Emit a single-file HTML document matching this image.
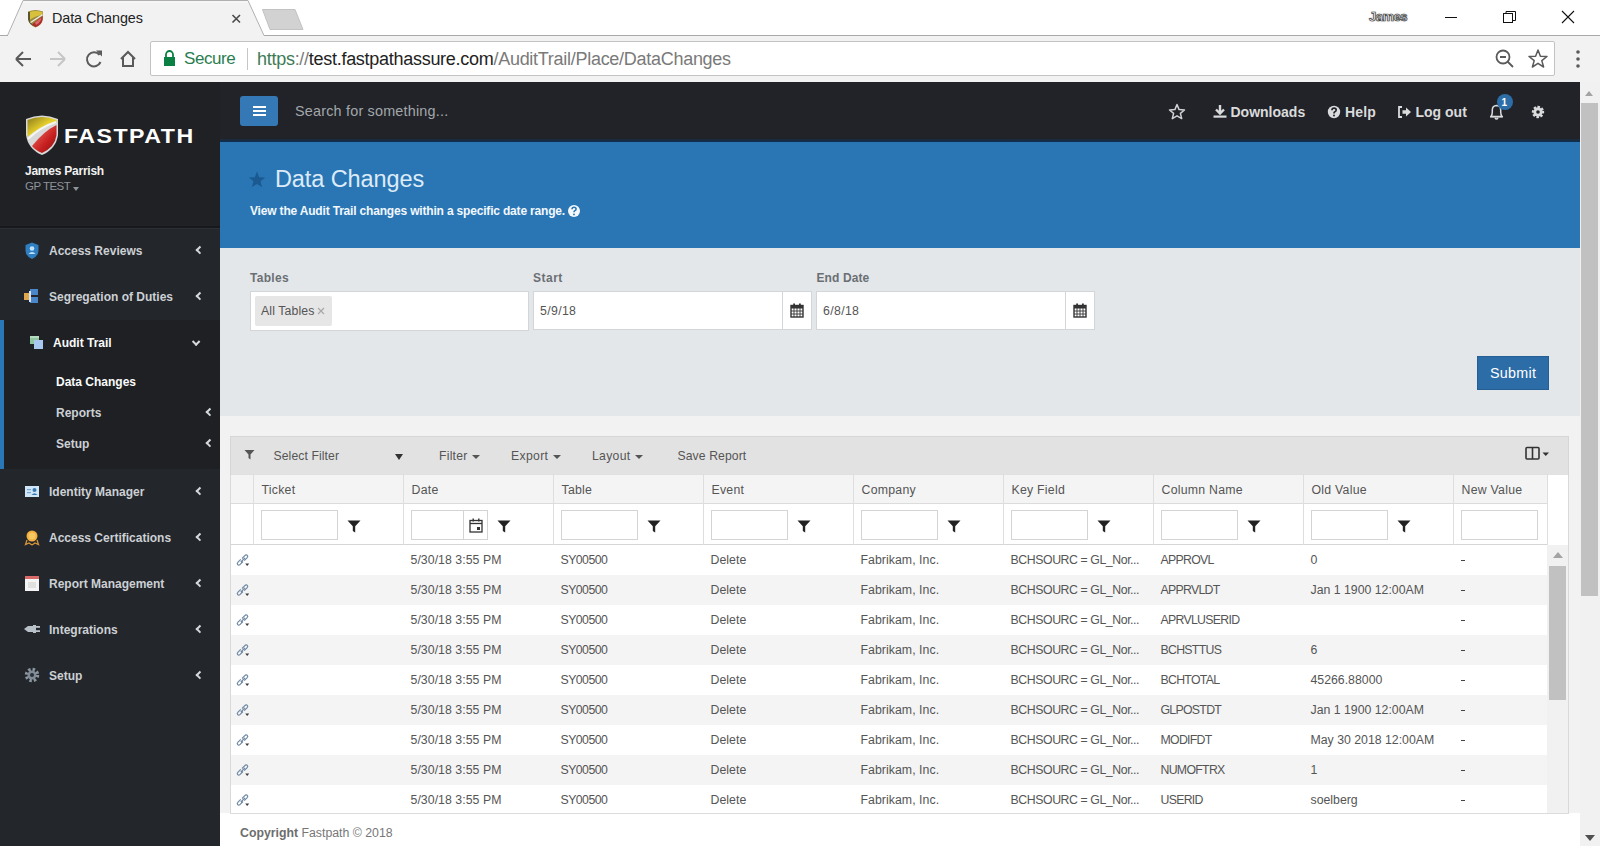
<!DOCTYPE html>
<html><head><meta charset="utf-8">
<style>
*{box-sizing:border-box;margin:0;padding:0}
html,body{width:1600px;height:846px;overflow:hidden;background:#fff;font-family:"Liberation Sans",sans-serif}
.a{position:absolute}
.t{position:absolute;white-space:nowrap;line-height:1}
/* chrome */
#tabbar{left:0;top:0;width:1600px;height:36px;background:#fff}
#toolbar{left:0;top:35px;width:1600px;height:47px;background:#f2f2f2;border-top:1px solid #b9b9b9}
#omni{left:150px;top:41px;width:1405px;height:35px;background:#fff;border:1px solid #c3c3c3;border-radius:2px}
/* sidebar */
#side{left:0;top:82px;width:220px;height:764px;background:#23262a}
#logo{left:0;top:82px;width:220px;height:145px;background:#1f2125;border-bottom:1px solid #17181b}
.mi{position:absolute;left:49px;font-size:12px;font-weight:bold;color:#ccd0d5;white-space:nowrap;line-height:1}
.chev{position:absolute;left:195px;width:5.5px;height:5.5px;border-left:2px solid #d6d9dc;border-bottom:2px solid #d6d9dc;transform:rotate(45deg)}
/* topnav */
#top{left:220px;top:82px;width:1360px;height:60px;background:#212328}
#hdr{left:220px;top:142px;width:1360px;height:106px;background:#2a76b5}
#filt{left:220px;top:248px;width:1360px;height:168px;background:#e4e7ea}
#content{left:220px;top:416px;width:1360px;height:397px;background:#f2f2f2}
#foot{left:220px;top:813px;width:1360px;height:33px;background:#fff}
#pscroll{left:1580px;top:82px;width:20px;height:764px;background:#f1f1f1}
</style></head><body>
<div class="a" id="tabbar"></div>

<svg class="a" style="left:0;top:0" width="1600" height="36">
  <polygon points="7.5,36 23,0.5 248,0.5 264,36" fill="#f2f2f2"/><path d="M7.5,35.5 L23,0.5 H248 L264,35.5" fill="none" stroke="#b0b0b0" stroke-width="1"/><line x1="23" y1="2" x2="248" y2="2" stroke="#fafafa" stroke-width="1.2"/>
  <polygon points="262.5,9.5 295,9.5 303,29.5 270,29.5" fill="#d2d2d2" stroke="#c2c2c2" stroke-width="1" stroke-linejoin="round"/>
  <line x1="0" y1="35.5" x2="8" y2="35.5" stroke="#a9a9a9"/>
  <line x1="264" y1="35.5" x2="1600" y2="35.5" stroke="#a9a9a9"/>
  <path d="M232.5,15 L240,22.5 M240,15 L232.5,22.5" stroke="#4a4a4a" stroke-width="1.6"/>
  <line x1="1445" y1="17.5" x2="1457" y2="17.5" stroke="#111" stroke-width="1"/>
  <rect x="1503.5" y="13.5" width="9" height="9" fill="none" stroke="#111" stroke-width="1"/>
  <path d="M1506,13.5 V11.5 H1515.5 V20.5 H1512.5" fill="none" stroke="#111" stroke-width="1"/>
  <path d="M1562,11 L1574,23 M1574,11 L1562,23" stroke="#111" stroke-width="1.1"/>
</svg>
<div class="t" style="left:1369px;top:10px;font-size:13px;font-weight:bold;color:#f4f4f4;-webkit-text-stroke:0.7px #3a3a3a;text-shadow:0 0 2px #aaa;letter-spacing:-0.5px">James</div>
<svg class="a" style="left:27px;top:9px" width="17" height="19" viewBox="0 0 17 19">
  <path d="M1,2.5 Q8.5,-0.5 16,2.5 L16,10 Q15,16 8.5,18.5 Q2,16 1,10 Z" fill="#9a8a3a"/>
  <path d="M2.5,3 Q8.5,1 15.5,3 L15.5,6 Q9,6.5 2.5,11 Z" fill="#d6c03c"/>
  <path d="M1,3 L3,3 L3,12 Q4,15 8.5,17.5 Q2,16 1,10 Z" fill="#5a5430"/>
  <path d="M5,15.5 L15.5,7 L15.5,10 Q15,16 8.5,18 Z" fill="#b02a2e"/>
  <path d="M8,13.5 L14.5,8.5 L14,11 Q12,15 9,16 Z" fill="#d86a6a"/>
  <path d="M3.5,13.5 L15.5,5.8" stroke="#eeeeee" stroke-width="1.3"/>
</svg>
<div class="t" style="left:52px;top:11px;font-size:14.4px;color:#222;letter-spacing:-0.1px">Data Changes</div>
<div class="a" style="left:0;top:36px;width:1600px;height:46px;background:#f2f2f2"></div>
<svg class="a" style="left:0;top:36px" width="150" height="46">
  <path d="M16,23 H31 M16,23 L23,16 M16,23 L23,30" stroke="#5a5a5a" stroke-width="2" fill="none"/>
  <path d="M50,23 H65 M65,23 L58,16 M65,23 L58,30" stroke="#c6c6c6" stroke-width="2" fill="none"/>
  <path d="M99.5,19 A7,7 0 1 0 100.5,26" stroke="#5a5a5a" stroke-width="2" fill="none"/>
  <path d="M96,14.5 L102,14.5 L102,20.5 Z" fill="#5a5a5a"/>
  <path d="M121,23 L128,16 L135,23 M123,21.5 V30 H133 V21.5" stroke="#5a5a5a" stroke-width="2" fill="none" stroke-linejoin="miter"/>
</svg>
<div class="a" id="omni"></div>
<svg class="a" style="left:160px;top:48px" width="20" height="22">
  <path d="M6,9 V6.5 A3.5,3.5 0 0 1 13,6.5 V9" stroke="#0b8043" stroke-width="1.8" fill="none"/>
  <rect x="4" y="9" width="11" height="9" fill="#0b8043"/>
</svg>
<div class="t" style="left:184px;top:50px;font-size:17px;color:#2a7d50;letter-spacing:-0.45px">Secure</div>
<div class="a" style="left:247px;top:48px;width:1px;height:22px;background:#c6c6c6"></div>
<div class="t" style="left:257px;top:50px;font-size:18px;letter-spacing:-0.28px"><span style="color:#3e7b55">https</span><span style="color:#7a7a7a">://</span><span style="color:#222">test.fastpathassure.com</span><span style="color:#7a7a7a">/AuditTrail/Place/DataChanges</span></div>
<svg class="a" style="left:1490px;top:44px" width="70" height="30">
  <circle cx="13" cy="13" r="6.5" stroke="#5a5a5a" stroke-width="1.8" fill="none"/>
  <path d="M10,13 H16 M17.5,17.5 L23,23" stroke="#5a5a5a" stroke-width="1.8"/>
  <path d="M48,6 L50.4,12.2 L57,12.5 L51.8,16.6 L53.6,23 L48,19.3 L42.4,23 L44.2,16.6 L39,12.5 L45.6,12.2 Z" stroke="#5a5a5a" stroke-width="1.5" fill="none" stroke-linejoin="round"/>
</svg>
<svg class="a" style="left:1572px;top:48px" width="12" height="22">
  <circle cx="6" cy="4" r="1.8" fill="#5a5a5a"/><circle cx="6" cy="11" r="1.8" fill="#5a5a5a"/><circle cx="6" cy="18" r="1.8" fill="#5a5a5a"/>
</svg>
<div class="a" id="side"></div>
<div class="a" id="logo"></div>

<div class="a" style="left:0;top:227px;width:220px;height:1px;background:#18191c"></div>
<div class="a" style="left:0;top:228px;width:220px;height:1px;background:#2c2f34"></div>
<svg class="a" style="left:24px;top:113px" width="36" height="44" viewBox="0 0 36 44">
  <defs>
    <linearGradient id="gy" x1="0" y1="0" x2="1" y2="1"><stop offset="0" stop-color="#8a7a1e"/><stop offset="0.5" stop-color="#e6cf2a"/><stop offset="1" stop-color="#f2e27a"/></linearGradient>
    <linearGradient id="gr" x1="0" y1="0" x2="1" y2="1"><stop offset="0" stop-color="#f07a6a"/><stop offset="0.6" stop-color="#c82020"/><stop offset="1" stop-color="#8a1010"/></linearGradient>
  </defs>
  <path d="M2,6 Q18,-1 34,6 L34,22 Q32,36 18,42 Q4,36 2,22 Z" fill="#d8d8d8"/>
  <path d="M3.5,7 Q18,1 32.5,7 L32.5,10 Q18,12 3.5,24 Z" fill="url(#gy)"/>
  <path d="M8,33 Q20,18 32.5,12 L32.5,22 Q31,34 18,40 Q11,37 8,33 Z" fill="url(#gr)"/>
  <path d="M4,26 Q16,14 32,9" stroke="#f4f4f4" stroke-width="2.2" fill="none"/>
</svg>
<div class="t" style="left:64px;top:125.5px;font-size:20.5px;font-weight:bold;color:#fff;letter-spacing:1.3px;transform:scaleX(1.13);transform-origin:0 0">FASTPATH</div>
<div class="t" style="left:25px;top:164.5px;font-size:12px;font-weight:bold;color:#f2f2f2;letter-spacing:-0.24px">James Parrish</div>
<div class="t" style="left:25px;top:181px;font-size:11.5px;color:#8e949b;letter-spacing:-0.5px">GP TEST</div>
<div class="a" style="left:73px;top:187px;width:0;height:0;border-left:3.5px solid transparent;border-right:3.5px solid transparent;border-top:4px solid #8e949b"></div>

<div class="a" style="left:0;top:320px;width:220px;height:149px;background:#1e2024"></div>
<div class="a" style="left:0;top:320px;width:4px;height:149px;background:#2a77b7"></div>

<svg class="a" style="left:24px;top:242px" width="16" height="18" viewBox="0 0 16 18">
  <path d="M1.5,3 L8,0.5 L14.5,3 V9 Q14,14.5 8,17 Q2,14.5 1.5,9 Z" fill="#2f7fc0"/>
  <circle cx="8" cy="6.5" r="2.3" fill="#bfe3ff"/><path d="M4.5,12 Q8,8 11.5,12 Z" fill="#bfe3ff"/>
</svg>
<div class="mi" style="top:245px">Access Reviews</div>
<svg class="a" style="left:23px;top:288px" width="18" height="17" viewBox="0 0 18 17">
  <rect x="1" y="5" width="5" height="7" fill="#e0a84a"/>
  <rect x="7" y="1" width="8" height="6" fill="#4a86c8"/><rect x="7" y="9" width="8" height="6" fill="#4a86c8"/>
  <rect x="6" y="3" width="2" height="11" fill="#d8e6f4"/>
</svg>
<div class="mi" style="top:291px">Segregation of Duties</div>
<svg class="a" style="left:29px;top:335px" width="16" height="16" viewBox="0 0 16 16">
  <rect x="1" y="1" width="9" height="8" fill="#8fc6a0"/><rect x="1" y="1" width="9" height="2" fill="#b5dcc0"/>
  <rect x="5" y="5" width="9" height="9" fill="#a8c8f0"/>
</svg>
<div class="mi" style="top:337px;left:53px;color:#fafafa">Audit Trail</div>
<div class="mi" style="top:376px;left:56px;color:#fafafa">Data Changes</div>
<div class="mi" style="top:407px;left:56px">Reports</div>
<div class="mi" style="top:438px;left:56px">Setup</div>
<svg class="a" style="left:24px;top:485px" width="16" height="14" viewBox="0 0 16 14">
  <rect x="1" y="1" width="14" height="11" fill="#cfe6f8"/>
  <circle cx="10.5" cy="5" r="2" fill="#3c78b0"/><path d="M7.5,10 Q10.5,6.5 13.5,10 Z" fill="#3c78b0"/>
  <rect x="3" y="4" width="4" height="1.2" fill="#7aa6cc"/><rect x="3" y="7" width="4" height="1.2" fill="#7aa6cc"/>
</svg>
<div class="mi" style="top:486px">Identity Manager</div>
<svg class="a" style="left:24px;top:529px" width="16" height="17" viewBox="0 0 16 17">
  <path d="M3,11 L1.5,15.5 L5,14 L8,16 M13,11 L14.5,15.5 L11,14 L8,16" stroke="#d4963a" stroke-width="1.3" fill="none"/>
  <circle cx="8" cy="7" r="5.5" fill="#f0b040"/><circle cx="8" cy="7" r="3.5" fill="#f6c860"/>
</svg>
<div class="mi" style="top:532px">Access Certifications</div>
<svg class="a" style="left:24px;top:575px" width="16" height="17" viewBox="0 0 16 17">
  <rect x="1" y="1" width="14" height="15" fill="#f4f4f4"/>
  <rect x="1" y="1" width="14" height="3" fill="#d86a6a"/>
  <rect x="4" y="7" width="8" height="6" fill="#e0e0e0"/>
</svg>
<div class="mi" style="top:578px">Report Management</div>
<svg class="a" style="left:23px;top:622px" width="18" height="14" viewBox="0 0 18 14">
  <path d="M1,7 L5,4 H10 V10 H5 Z" fill="#b8c0c8"/>
  <rect x="10" y="3" width="3" height="8" fill="#b8c0c8"/>
  <rect x="13" y="4" width="4" height="1.8" fill="#b8c0c8"/><rect x="13" y="8.2" width="4" height="1.8" fill="#b8c0c8"/>
</svg>
<div class="mi" style="top:624px">Integrations</div>
<svg class="a" style="left:24px;top:667px" width="16" height="16" viewBox="0 0 16 16">
  <circle cx="8" cy="8" r="5.5" fill="none" stroke="#8a96a0" stroke-width="3.5" stroke-dasharray="2.4 1.9"/>
  <circle cx="8" cy="8" r="4.5" fill="#7f8b96"/><circle cx="8" cy="8" r="2" fill="#2a3036"/>
</svg>
<div class="mi" style="top:670px">Setup</div>
<div class="chev" style="left:197px;top:247px"></div>
<div class="chev" style="left:197px;top:293px"></div>
<div class="chev" style="left:197px;top:488px"></div>
<div class="chev" style="left:197px;top:534px"></div>
<div class="chev" style="left:197px;top:580px"></div>
<div class="chev" style="left:197px;top:626px"></div>
<div class="chev" style="left:197px;top:672px"></div>
<div class="chev" style="left:207px;top:409px"></div>
<div class="chev" style="left:207px;top:440px"></div>
<div class="chev" style="left:193px;top:339px;transform:rotate(-45deg)"></div>
<div class="a" id="top"></div>
<div class="a" id="hdr"></div>
<div class="a" style="left:220px;top:139px;width:1360px;height:3px;background:linear-gradient(#1d2a38,#0f3050)"></div>
<div class="a" id="filt"></div>
<div class="a" id="content"></div>
<div class="a" id="foot"></div>
<div class="a" id="pscroll"></div>
<!--MAIN1-->
<div class="a" style="left:240px;top:96px;width:38px;height:30px;background:#3478b6;border-radius:3px"></div>
<div class="a" style="left:253px;top:106px;width:13px;height:2px;background:#fff;box-shadow:0 4px 0 #fff,0 8px 0 #fff"></div>
<div class="t" style="left:295px;top:103.81px;font-size:14.4px;color:#a3a7ac;letter-spacing:0.2px">Search for something...</div>
<svg class="a" style="left:1168px;top:103px" width="18" height="17" viewBox="0 0 18 17">
<path d="M9,1.5 L11.1,6.6 L16.5,7 L12.4,10.4 L13.7,15.6 L9,12.8 L4.3,15.6 L5.6,10.4 L1.5,7 L6.9,6.6 Z" fill="none" stroke="#d0d2d4" stroke-width="1.5" stroke-linejoin="round"/></svg>
<svg class="a" style="left:1212px;top:104px" width="16" height="15" viewBox="0 0 16 15">
<path d="M8,1 V9 M4,5.5 L8,9.5 L12,5.5" stroke="#dadbdc" stroke-width="2.4" fill="none"/><rect x="1.5" y="11.5" width="13" height="2.2" fill="#dadbdc"/></svg>
<svg class="a" style="left:1327px;top:105px" width="14" height="14" viewBox="0 0 14 14">
<circle cx="7" cy="7" r="6.2" fill="#dadbdc"/><path d="M4.9,5.3 Q5,3.2 7,3.2 Q9.2,3.2 9.2,5 Q9.2,6.3 7.6,7 Q7,7.3 7,8.4" stroke="#212328" stroke-width="1.7" fill="none"/><circle cx="7" cy="10.6" r="1" fill="#212328"/></svg>
<svg class="a" style="left:1397px;top:106px" width="15" height="12" viewBox="0 0 15 12">
<path d="M5,1 H2 V11 H5" stroke="#dadbdc" stroke-width="1.8" fill="none"/><path d="M5.5,4.3 H9 V1.5 L14,6 L9,10.5 V7.7 H5.5 Z" fill="#dadbdc"/></svg>
<svg class="a" style="left:1488px;top:103px" width="17" height="18" viewBox="0 0 17 18">
<path d="M3,13.5 Q4.3,12 4.3,9 V7 Q4.3,2.8 8.5,2.5 Q12.7,2.8 12.7,7 V9 Q12.7,12 14,13.5 Z" fill="none" stroke="#dadbdc" stroke-width="1.5" stroke-linejoin="round"/>
<path d="M7,15 Q8.5,17 10,15" stroke="#dadbdc" stroke-width="1.5" fill="none"/><rect x="2" y="13" width="13" height="1.5" fill="#dadbdc"/></svg>
<div class="a" style="left:1497px;top:94px;width:16px;height:16px;border-radius:50%;background:#2d6ea8"></div>
<svg class="a" style="left:1531px;top:105px" width="14" height="14" viewBox="0 0 14 14">
<circle cx="7" cy="7" r="5.1" fill="none" stroke="#dadbdc" stroke-width="2.2" stroke-dasharray="2.4 1.6" transform="rotate(-12 7 7)"/><circle cx="7" cy="7" r="4.7" fill="#dadbdc"/><circle cx="7" cy="7" r="1.8" fill="#212328"/></svg>
<div class="t" style="left:1501.5px;top:98.03px;font-size:10px;color:#fff;font-weight:bold">1</div>
<div class="t" style="left:1230.5px;top:104.95px;font-size:14px;color:#dadbdc;font-weight:bold">Downloads</div>
<div class="t" style="left:1345px;top:104.95px;font-size:14px;color:#dadbdc;font-weight:bold;letter-spacing:0.15px">Help</div>
<div class="t" style="left:1415.5px;top:104.95px;font-size:14px;color:#dadbdc;font-weight:bold">Log out</div>
<svg class="a" style="left:248px;top:171px" width="18" height="17" viewBox="0 0 18 17">
<path d="M9,0.5 L11.2,6.2 L17.3,6.5 L12.5,10.3 L14.2,16.3 L9,12.9 L3.8,16.3 L5.5,10.3 L0.7,6.5 L6.8,6.2 Z" fill="#1b5a91"/></svg>
<div class="t" style="left:275px;top:167.91px;font-size:23.5px;color:#dcebf7;letter-spacing:-0.1px">Data Changes</div>
<div class="t" style="left:250px;top:204.84px;font-size:12px;color:#f2f8fd;font-weight:bold;letter-spacing:-0.18px">View the Audit Trail changes within a specific date range.</div>
<svg class="a" style="left:567px;top:204px" width="14" height="14" viewBox="0 0 14 14">
<circle cx="7" cy="7" r="6" fill="#f4f8fc"/><path d="M5,5.3 Q5.1,3.3 7,3.3 Q9.1,3.3 9.1,5 Q9.1,6.2 7.6,6.9 Q7,7.2 7,8.3" stroke="#2a76b5" stroke-width="1.6" fill="none"/><circle cx="7" cy="10.4" r="0.95" fill="#2a76b5"/></svg>
<div class="t" style="left:250px;top:271.84px;font-size:12px;color:#6a6f74;font-weight:bold;letter-spacing:0.3px">Tables</div>
<div class="t" style="left:533px;top:271.84px;font-size:12px;color:#6a6f74;font-weight:bold;letter-spacing:0.3px;letter-spacing:0.5px">Start</div>
<div class="t" style="left:816.5px;top:271.84px;font-size:12px;color:#6a6f74;font-weight:bold;letter-spacing:0.3px;letter-spacing:0.1px">End Date</div>
<div class="a" style="left:250px;top:291px;width:279px;height:40px;background:#fff;border:1px solid #d3d6d9"></div>
<div class="a" style="left:255px;top:296px;width:77px;height:30px;background:#e6e6e6;border-radius:2px"></div>
<div class="t" style="left:261px;top:305.09px;font-size:12.3px;color:#555;letter-spacing:0.1px">All Tables</div>
<svg class="a" style="left:317px;top:307px" width="8" height="8"><path d="M1,1 L7,7 M7,1 L1,7" stroke="#a8a8a8" stroke-width="1.2"/></svg>
<div class="a" style="left:533px;top:291px;width:250px;height:39px;background:#fff;border:1px solid #d3d6d9;border-right:none"></div>
<div class="a" style="left:782px;top:291px;width:30px;height:39px;background:#fff;border:1px solid #d3d6d9"></div>
<div class="t" style="left:540px;top:305.09px;font-size:12.3px;color:#555;letter-spacing:0.35px">5/9/18</div>
<svg class="a" style="left:790px;top:303px" width="14" height="15" viewBox="0 0 14 15">
<rect x="1" y="2.5" width="12" height="11.5" fill="none" stroke="#333" stroke-width="1.4"/><rect x="1" y="2.5" width="12" height="3" fill="#333"/>
<path d="M1,8 H13 M1,11 H13 M4,5 V14 M7,5 V14 M10,5 V14" stroke="#333" stroke-width="0.9"/>
<rect x="3.2" y="0.5" width="1.8" height="3.5" fill="#333"/><rect x="9" y="0.5" width="1.8" height="3.5" fill="#333"/></svg>
<div class="a" style="left:816px;top:291px;width:250px;height:39px;background:#fff;border:1px solid #d3d6d9;border-right:none"></div>
<div class="a" style="left:1065px;top:291px;width:30px;height:39px;background:#fff;border:1px solid #d3d6d9"></div>
<div class="t" style="left:823px;top:305.09px;font-size:12.3px;color:#555;letter-spacing:0.35px">6/8/18</div>
<svg class="a" style="left:1073px;top:303px" width="14" height="15" viewBox="0 0 14 15">
<rect x="1" y="2.5" width="12" height="11.5" fill="none" stroke="#333" stroke-width="1.4"/><rect x="1" y="2.5" width="12" height="3" fill="#333"/>
<path d="M1,8 H13 M1,11 H13 M4,5 V14 M7,5 V14 M10,5 V14" stroke="#333" stroke-width="0.9"/>
<rect x="3.2" y="0.5" width="1.8" height="3.5" fill="#333"/><rect x="9" y="0.5" width="1.8" height="3.5" fill="#333"/></svg>
<div class="a" style="left:1477px;top:356px;width:72px;height:34px;background:#2c6ca7;border:1px solid #255f94"></div>
<div class="t" style="left:1490px;top:366.40px;font-size:14.3px;color:#fff;letter-spacing:0.3px">Submit</div>
<!--/MAIN1-->
<!--GRID-->
<div class="a" style="left:230px;top:436px;width:1339px;height:377px;background:#fff;border:1px solid #d9d9d9;border-bottom:none"></div>
<div class="a" style="left:230px;top:436px;width:1339px;height:39px;background:#e2e2e2;border:1px solid #d6d6d6;border-bottom:none"></div>
<svg class="a" style="left:244px;top:449px" width="11" height="11" viewBox="0 0 11 11"><path d="M0.5,1 H10.5 L6.5,5.5 V10.5 L4.5,9 V5.5 Z" fill="#555"/></svg>
<div class="t" style="left:273.5px;top:450.17px;font-size:12.2px;color:#555;letter-spacing:0.1px">Select Filter</div>
<div class="a" style="left:395px;top:453.5px;width:0;height:0;border-left:4.0px solid transparent;border-right:4.0px solid transparent;border-top:6px solid #333"></div>
<div class="t" style="left:439px;top:450.17px;font-size:12.2px;color:#555;letter-spacing:0.1px;letter-spacing:0.25px">Filter</div>
<div class="a" style="left:472px;top:454.5px;width:0;height:0;border-left:4.0px solid transparent;border-right:4.0px solid transparent;border-top:4px solid #555"></div>
<div class="t" style="left:511px;top:450.17px;font-size:12.2px;color:#555;letter-spacing:0.1px;letter-spacing:0.35px">Export</div>
<div class="a" style="left:553px;top:454.5px;width:0;height:0;border-left:4.0px solid transparent;border-right:4.0px solid transparent;border-top:4px solid #555"></div>
<div class="t" style="left:592px;top:450.17px;font-size:12.2px;color:#555;letter-spacing:0.1px;letter-spacing:0.3px">Layout</div>
<div class="a" style="left:635px;top:454.5px;width:0;height:0;border-left:4.0px solid transparent;border-right:4.0px solid transparent;border-top:4px solid #555"></div>
<div class="t" style="left:677.5px;top:450.17px;font-size:12.2px;color:#555;letter-spacing:0.1px">Save Report</div>
<svg class="a" style="left:1525px;top:446px" width="26" height="15" viewBox="0 0 26 15"><rect x="1" y="1.5" width="13" height="11.5" fill="none" stroke="#333" stroke-width="1.6" rx="1"/><path d="M7.5,1.5 V13" stroke="#333" stroke-width="1.6"/><path d="M17.5,6.5 H24 L20.75,10 Z" fill="#333"/></svg>
<div class="a" style="left:231px;top:474px;width:1316px;height:30px;background:#f4f4f4;border-bottom:1px solid #dcdcdc;border-top:1px solid #e0e0e0"></div>
<div class="a" style="left:231px;top:504px;width:1316px;height:41px;background:#fff;border-bottom:1px solid #d6d6d6"></div>
<div class="a" style="left:253px;top:474px;width:1px;height:71px;background:#dedede"></div>
<div class="a" style="left:403px;top:474px;width:1px;height:71px;background:#dedede"></div>
<div class="a" style="left:553px;top:474px;width:1px;height:71px;background:#dedede"></div>
<div class="a" style="left:703px;top:474px;width:1px;height:71px;background:#dedede"></div>
<div class="a" style="left:853px;top:474px;width:1px;height:71px;background:#dedede"></div>
<div class="a" style="left:1003px;top:474px;width:1px;height:71px;background:#dedede"></div>
<div class="a" style="left:1153px;top:474px;width:1px;height:71px;background:#dedede"></div>
<div class="a" style="left:1303px;top:474px;width:1px;height:71px;background:#dedede"></div>
<div class="a" style="left:1453px;top:474px;width:1px;height:71px;background:#dedede"></div>
<div class="a" style="left:1547px;top:474px;width:1px;height:71px;background:#dedede"></div>
<div class="t" style="left:261.5px;top:483.89px;font-size:12.3px;color:#555;letter-spacing:0.25px">Ticket</div>
<div class="t" style="left:411.5px;top:483.89px;font-size:12.3px;color:#555;letter-spacing:0.25px">Date</div>
<div class="t" style="left:561.5px;top:483.89px;font-size:12.3px;color:#555;letter-spacing:0.25px">Table</div>
<div class="t" style="left:711.5px;top:483.89px;font-size:12.3px;color:#555;letter-spacing:0.25px">Event</div>
<div class="t" style="left:861.5px;top:483.89px;font-size:12.3px;color:#555;letter-spacing:0.25px">Company</div>
<div class="t" style="left:1011.5px;top:483.89px;font-size:12.3px;color:#555;letter-spacing:0.25px">Key Field</div>
<div class="t" style="left:1161.5px;top:483.89px;font-size:12.3px;color:#555;letter-spacing:0.25px">Column Name</div>
<div class="t" style="left:1311.5px;top:483.89px;font-size:12.3px;color:#555;letter-spacing:0.25px">Old Value</div>
<div class="t" style="left:1461.5px;top:483.89px;font-size:12.3px;color:#555;letter-spacing:0.25px">New Value</div>
<div class="a" style="left:261px;top:510px;width:77px;height:30px;border:1px solid #d4d4d4;background:#fff"></div>
<svg class="a" style="left:347px;top:520px" width="14" height="13" viewBox="0 0 14 13"><path d="M0.5,0.5 H13.5 L8.2,6.3 V12.5 L5.8,11 V6.3 Z" fill="#222"/></svg>
<div class="a" style="left:411px;top:510px;width:77px;height:30px;border:1px solid #d4d4d4;background:#fff"></div>
<div class="a" style="left:463px;top:510px;width:1px;height:30px;background:#d4d4d4"></div>
<svg class="a" style="left:469px;top:518px" width="14" height="15" viewBox="0 0 14 15"><rect x="1" y="2.5" width="12" height="11.5" fill="none" stroke="#333" stroke-width="1.3"/><path d="M1,5.5 H13" stroke="#333" stroke-width="1.3"/><rect x="3.5" y="0.5" width="1.4" height="3" fill="#333"/><rect x="9.1" y="0.5" width="1.4" height="3" fill="#333"/><rect x="8" y="9" width="3" height="3" fill="#333"/></svg>
<svg class="a" style="left:497px;top:520px" width="14" height="13" viewBox="0 0 14 13"><path d="M0.5,0.5 H13.5 L8.2,6.3 V12.5 L5.8,11 V6.3 Z" fill="#222"/></svg>
<div class="a" style="left:561px;top:510px;width:77px;height:30px;border:1px solid #d4d4d4;background:#fff"></div>
<svg class="a" style="left:647px;top:520px" width="14" height="13" viewBox="0 0 14 13"><path d="M0.5,0.5 H13.5 L8.2,6.3 V12.5 L5.8,11 V6.3 Z" fill="#222"/></svg>
<div class="a" style="left:711px;top:510px;width:77px;height:30px;border:1px solid #d4d4d4;background:#fff"></div>
<svg class="a" style="left:797px;top:520px" width="14" height="13" viewBox="0 0 14 13"><path d="M0.5,0.5 H13.5 L8.2,6.3 V12.5 L5.8,11 V6.3 Z" fill="#222"/></svg>
<div class="a" style="left:861px;top:510px;width:77px;height:30px;border:1px solid #d4d4d4;background:#fff"></div>
<svg class="a" style="left:947px;top:520px" width="14" height="13" viewBox="0 0 14 13"><path d="M0.5,0.5 H13.5 L8.2,6.3 V12.5 L5.8,11 V6.3 Z" fill="#222"/></svg>
<div class="a" style="left:1011px;top:510px;width:77px;height:30px;border:1px solid #d4d4d4;background:#fff"></div>
<svg class="a" style="left:1097px;top:520px" width="14" height="13" viewBox="0 0 14 13"><path d="M0.5,0.5 H13.5 L8.2,6.3 V12.5 L5.8,11 V6.3 Z" fill="#222"/></svg>
<div class="a" style="left:1161px;top:510px;width:77px;height:30px;border:1px solid #d4d4d4;background:#fff"></div>
<svg class="a" style="left:1247px;top:520px" width="14" height="13" viewBox="0 0 14 13"><path d="M0.5,0.5 H13.5 L8.2,6.3 V12.5 L5.8,11 V6.3 Z" fill="#222"/></svg>
<div class="a" style="left:1311px;top:510px;width:77px;height:30px;border:1px solid #d4d4d4;background:#fff"></div>
<svg class="a" style="left:1397px;top:520px" width="14" height="13" viewBox="0 0 14 13"><path d="M0.5,0.5 H13.5 L8.2,6.3 V12.5 L5.8,11 V6.3 Z" fill="#222"/></svg>
<div class="a" style="left:1461px;top:510px;width:77px;height:30px;border:1px solid #d4d4d4;background:#fff"></div>
<div class="a" style="left:231px;top:545px;width:1338px;height:268px;overflow:hidden">
<div class="a" style="left:0;top:0px;width:1316px;height:30px;background:#fff"></div>
<div class="a" style="left:0;top:30px;width:1316px;height:30px;background:#f4f4f4"></div>
<div class="a" style="left:0;top:60px;width:1316px;height:30px;background:#fff"></div>
<div class="a" style="left:0;top:90px;width:1316px;height:30px;background:#f4f4f4"></div>
<div class="a" style="left:0;top:120px;width:1316px;height:30px;background:#fff"></div>
<div class="a" style="left:0;top:150px;width:1316px;height:30px;background:#f4f4f4"></div>
<div class="a" style="left:0;top:180px;width:1316px;height:30px;background:#fff"></div>
<div class="a" style="left:0;top:210px;width:1316px;height:30px;background:#f4f4f4"></div>
<div class="a" style="left:0;top:240px;width:1316px;height:30px;background:#fff"></div>
</div>
<svg class="a" style="left:235px;top:552.3px" width="15" height="15" viewBox="0 0 15 15"><path d="M7,6.5 L9.8,3.7 Q11.2,2.3 12.3,3.4 Q13.4,4.5 12,5.9 L9.2,8.7 M8,9.5 L5.2,12.3 Q3.8,13.7 2.7,12.6 Q1.6,11.5 3,10.1 L5.8,7.3 M5.8,10 L10,5.8" stroke="#7189a5" stroke-width="1.2" fill="none"/><path d="M10.2,11.6 H14.2 L12.2,14 Z" fill="#3d3d3d"/></svg>
<div class="t" style="left:410.5px;top:553.89px;font-size:12.3px;color:#555;letter-spacing:0.05px">5/30/18 3:55 PM</div>
<div class="t" style="left:560.5px;top:553.89px;font-size:12.3px;color:#555;letter-spacing:0.05px;letter-spacing:-0.55px">SY00500</div>
<div class="t" style="left:710.5px;top:553.89px;font-size:12.3px;color:#555;letter-spacing:0.05px">Delete</div>
<div class="t" style="left:860.5px;top:553.89px;font-size:12.3px;color:#555;letter-spacing:0.05px">Fabrikam, Inc.</div>
<div class="t" style="left:1010.5px;top:553.89px;font-size:12.3px;color:#555;letter-spacing:0.05px;letter-spacing:-0.42px">BCHSOURC = GL_Nor...</div>
<div class="t" style="left:1160.5px;top:553.89px;font-size:12.3px;color:#555;letter-spacing:0.05px;letter-spacing:-0.7px">APPROVL</div>
<div class="t" style="left:1310.5px;top:553.89px;font-size:12.3px;color:#555;letter-spacing:0.05px;letter-spacing:0px">0</div>
<div class="a" style="left:1461px;top:560.3px;width:4px;height:1.2px;background:#444"></div>
<svg class="a" style="left:235px;top:582.3px" width="15" height="15" viewBox="0 0 15 15"><path d="M7,6.5 L9.8,3.7 Q11.2,2.3 12.3,3.4 Q13.4,4.5 12,5.9 L9.2,8.7 M8,9.5 L5.2,12.3 Q3.8,13.7 2.7,12.6 Q1.6,11.5 3,10.1 L5.8,7.3 M5.8,10 L10,5.8" stroke="#7189a5" stroke-width="1.2" fill="none"/><path d="M10.2,11.6 H14.2 L12.2,14 Z" fill="#3d3d3d"/></svg>
<div class="t" style="left:410.5px;top:583.89px;font-size:12.3px;color:#555;letter-spacing:0.05px">5/30/18 3:55 PM</div>
<div class="t" style="left:560.5px;top:583.89px;font-size:12.3px;color:#555;letter-spacing:0.05px;letter-spacing:-0.55px">SY00500</div>
<div class="t" style="left:710.5px;top:583.89px;font-size:12.3px;color:#555;letter-spacing:0.05px">Delete</div>
<div class="t" style="left:860.5px;top:583.89px;font-size:12.3px;color:#555;letter-spacing:0.05px">Fabrikam, Inc.</div>
<div class="t" style="left:1010.5px;top:583.89px;font-size:12.3px;color:#555;letter-spacing:0.05px;letter-spacing:-0.42px">BCHSOURC = GL_Nor...</div>
<div class="t" style="left:1160.5px;top:583.89px;font-size:12.3px;color:#555;letter-spacing:0.05px;letter-spacing:-0.7px">APPRVLDT</div>
<div class="t" style="left:1310.5px;top:583.89px;font-size:12.3px;color:#555;letter-spacing:0.05px;letter-spacing:0px">Jan 1 1900 12:00AM</div>
<div class="a" style="left:1461px;top:590.3px;width:4px;height:1.2px;background:#444"></div>
<svg class="a" style="left:235px;top:612.3px" width="15" height="15" viewBox="0 0 15 15"><path d="M7,6.5 L9.8,3.7 Q11.2,2.3 12.3,3.4 Q13.4,4.5 12,5.9 L9.2,8.7 M8,9.5 L5.2,12.3 Q3.8,13.7 2.7,12.6 Q1.6,11.5 3,10.1 L5.8,7.3 M5.8,10 L10,5.8" stroke="#7189a5" stroke-width="1.2" fill="none"/><path d="M10.2,11.6 H14.2 L12.2,14 Z" fill="#3d3d3d"/></svg>
<div class="t" style="left:410.5px;top:613.89px;font-size:12.3px;color:#555;letter-spacing:0.05px">5/30/18 3:55 PM</div>
<div class="t" style="left:560.5px;top:613.89px;font-size:12.3px;color:#555;letter-spacing:0.05px;letter-spacing:-0.55px">SY00500</div>
<div class="t" style="left:710.5px;top:613.89px;font-size:12.3px;color:#555;letter-spacing:0.05px">Delete</div>
<div class="t" style="left:860.5px;top:613.89px;font-size:12.3px;color:#555;letter-spacing:0.05px">Fabrikam, Inc.</div>
<div class="t" style="left:1010.5px;top:613.89px;font-size:12.3px;color:#555;letter-spacing:0.05px;letter-spacing:-0.42px">BCHSOURC = GL_Nor...</div>
<div class="t" style="left:1160.5px;top:613.89px;font-size:12.3px;color:#555;letter-spacing:0.05px;letter-spacing:-0.7px">APRVLUSERID</div>
<div class="a" style="left:1461px;top:620.3px;width:4px;height:1.2px;background:#444"></div>
<svg class="a" style="left:235px;top:642.3px" width="15" height="15" viewBox="0 0 15 15"><path d="M7,6.5 L9.8,3.7 Q11.2,2.3 12.3,3.4 Q13.4,4.5 12,5.9 L9.2,8.7 M8,9.5 L5.2,12.3 Q3.8,13.7 2.7,12.6 Q1.6,11.5 3,10.1 L5.8,7.3 M5.8,10 L10,5.8" stroke="#7189a5" stroke-width="1.2" fill="none"/><path d="M10.2,11.6 H14.2 L12.2,14 Z" fill="#3d3d3d"/></svg>
<div class="t" style="left:410.5px;top:643.89px;font-size:12.3px;color:#555;letter-spacing:0.05px">5/30/18 3:55 PM</div>
<div class="t" style="left:560.5px;top:643.89px;font-size:12.3px;color:#555;letter-spacing:0.05px;letter-spacing:-0.55px">SY00500</div>
<div class="t" style="left:710.5px;top:643.89px;font-size:12.3px;color:#555;letter-spacing:0.05px">Delete</div>
<div class="t" style="left:860.5px;top:643.89px;font-size:12.3px;color:#555;letter-spacing:0.05px">Fabrikam, Inc.</div>
<div class="t" style="left:1010.5px;top:643.89px;font-size:12.3px;color:#555;letter-spacing:0.05px;letter-spacing:-0.42px">BCHSOURC = GL_Nor...</div>
<div class="t" style="left:1160.5px;top:643.89px;font-size:12.3px;color:#555;letter-spacing:0.05px;letter-spacing:-0.7px">BCHSTTUS</div>
<div class="t" style="left:1310.5px;top:643.89px;font-size:12.3px;color:#555;letter-spacing:0.05px;letter-spacing:0px">6</div>
<div class="a" style="left:1461px;top:650.3px;width:4px;height:1.2px;background:#444"></div>
<svg class="a" style="left:235px;top:672.3px" width="15" height="15" viewBox="0 0 15 15"><path d="M7,6.5 L9.8,3.7 Q11.2,2.3 12.3,3.4 Q13.4,4.5 12,5.9 L9.2,8.7 M8,9.5 L5.2,12.3 Q3.8,13.7 2.7,12.6 Q1.6,11.5 3,10.1 L5.8,7.3 M5.8,10 L10,5.8" stroke="#7189a5" stroke-width="1.2" fill="none"/><path d="M10.2,11.6 H14.2 L12.2,14 Z" fill="#3d3d3d"/></svg>
<div class="t" style="left:410.5px;top:673.89px;font-size:12.3px;color:#555;letter-spacing:0.05px">5/30/18 3:55 PM</div>
<div class="t" style="left:560.5px;top:673.89px;font-size:12.3px;color:#555;letter-spacing:0.05px;letter-spacing:-0.55px">SY00500</div>
<div class="t" style="left:710.5px;top:673.89px;font-size:12.3px;color:#555;letter-spacing:0.05px">Delete</div>
<div class="t" style="left:860.5px;top:673.89px;font-size:12.3px;color:#555;letter-spacing:0.05px">Fabrikam, Inc.</div>
<div class="t" style="left:1010.5px;top:673.89px;font-size:12.3px;color:#555;letter-spacing:0.05px;letter-spacing:-0.42px">BCHSOURC = GL_Nor...</div>
<div class="t" style="left:1160.5px;top:673.89px;font-size:12.3px;color:#555;letter-spacing:0.05px;letter-spacing:-0.7px">BCHTOTAL</div>
<div class="t" style="left:1310.5px;top:673.89px;font-size:12.3px;color:#555;letter-spacing:0.05px;letter-spacing:0px">45266.88000</div>
<div class="a" style="left:1461px;top:680.3px;width:4px;height:1.2px;background:#444"></div>
<svg class="a" style="left:235px;top:702.3px" width="15" height="15" viewBox="0 0 15 15"><path d="M7,6.5 L9.8,3.7 Q11.2,2.3 12.3,3.4 Q13.4,4.5 12,5.9 L9.2,8.7 M8,9.5 L5.2,12.3 Q3.8,13.7 2.7,12.6 Q1.6,11.5 3,10.1 L5.8,7.3 M5.8,10 L10,5.8" stroke="#7189a5" stroke-width="1.2" fill="none"/><path d="M10.2,11.6 H14.2 L12.2,14 Z" fill="#3d3d3d"/></svg>
<div class="t" style="left:410.5px;top:703.89px;font-size:12.3px;color:#555;letter-spacing:0.05px">5/30/18 3:55 PM</div>
<div class="t" style="left:560.5px;top:703.89px;font-size:12.3px;color:#555;letter-spacing:0.05px;letter-spacing:-0.55px">SY00500</div>
<div class="t" style="left:710.5px;top:703.89px;font-size:12.3px;color:#555;letter-spacing:0.05px">Delete</div>
<div class="t" style="left:860.5px;top:703.89px;font-size:12.3px;color:#555;letter-spacing:0.05px">Fabrikam, Inc.</div>
<div class="t" style="left:1010.5px;top:703.89px;font-size:12.3px;color:#555;letter-spacing:0.05px;letter-spacing:-0.42px">BCHSOURC = GL_Nor...</div>
<div class="t" style="left:1160.5px;top:703.89px;font-size:12.3px;color:#555;letter-spacing:0.05px;letter-spacing:-0.7px">GLPOSTDT</div>
<div class="t" style="left:1310.5px;top:703.89px;font-size:12.3px;color:#555;letter-spacing:0.05px;letter-spacing:0px">Jan 1 1900 12:00AM</div>
<div class="a" style="left:1461px;top:710.3px;width:4px;height:1.2px;background:#444"></div>
<svg class="a" style="left:235px;top:732.3px" width="15" height="15" viewBox="0 0 15 15"><path d="M7,6.5 L9.8,3.7 Q11.2,2.3 12.3,3.4 Q13.4,4.5 12,5.9 L9.2,8.7 M8,9.5 L5.2,12.3 Q3.8,13.7 2.7,12.6 Q1.6,11.5 3,10.1 L5.8,7.3 M5.8,10 L10,5.8" stroke="#7189a5" stroke-width="1.2" fill="none"/><path d="M10.2,11.6 H14.2 L12.2,14 Z" fill="#3d3d3d"/></svg>
<div class="t" style="left:410.5px;top:733.89px;font-size:12.3px;color:#555;letter-spacing:0.05px">5/30/18 3:55 PM</div>
<div class="t" style="left:560.5px;top:733.89px;font-size:12.3px;color:#555;letter-spacing:0.05px;letter-spacing:-0.55px">SY00500</div>
<div class="t" style="left:710.5px;top:733.89px;font-size:12.3px;color:#555;letter-spacing:0.05px">Delete</div>
<div class="t" style="left:860.5px;top:733.89px;font-size:12.3px;color:#555;letter-spacing:0.05px">Fabrikam, Inc.</div>
<div class="t" style="left:1010.5px;top:733.89px;font-size:12.3px;color:#555;letter-spacing:0.05px;letter-spacing:-0.42px">BCHSOURC = GL_Nor...</div>
<div class="t" style="left:1160.5px;top:733.89px;font-size:12.3px;color:#555;letter-spacing:0.05px;letter-spacing:-0.7px">MODIFDT</div>
<div class="t" style="left:1310.5px;top:733.89px;font-size:12.3px;color:#555;letter-spacing:0.05px;letter-spacing:0px">May 30 2018 12:00AM</div>
<div class="a" style="left:1461px;top:740.3px;width:4px;height:1.2px;background:#444"></div>
<svg class="a" style="left:235px;top:762.3px" width="15" height="15" viewBox="0 0 15 15"><path d="M7,6.5 L9.8,3.7 Q11.2,2.3 12.3,3.4 Q13.4,4.5 12,5.9 L9.2,8.7 M8,9.5 L5.2,12.3 Q3.8,13.7 2.7,12.6 Q1.6,11.5 3,10.1 L5.8,7.3 M5.8,10 L10,5.8" stroke="#7189a5" stroke-width="1.2" fill="none"/><path d="M10.2,11.6 H14.2 L12.2,14 Z" fill="#3d3d3d"/></svg>
<div class="t" style="left:410.5px;top:763.89px;font-size:12.3px;color:#555;letter-spacing:0.05px">5/30/18 3:55 PM</div>
<div class="t" style="left:560.5px;top:763.89px;font-size:12.3px;color:#555;letter-spacing:0.05px;letter-spacing:-0.55px">SY00500</div>
<div class="t" style="left:710.5px;top:763.89px;font-size:12.3px;color:#555;letter-spacing:0.05px">Delete</div>
<div class="t" style="left:860.5px;top:763.89px;font-size:12.3px;color:#555;letter-spacing:0.05px">Fabrikam, Inc.</div>
<div class="t" style="left:1010.5px;top:763.89px;font-size:12.3px;color:#555;letter-spacing:0.05px;letter-spacing:-0.42px">BCHSOURC = GL_Nor...</div>
<div class="t" style="left:1160.5px;top:763.89px;font-size:12.3px;color:#555;letter-spacing:0.05px;letter-spacing:-0.7px">NUMOFTRX</div>
<div class="t" style="left:1310.5px;top:763.89px;font-size:12.3px;color:#555;letter-spacing:0.05px;letter-spacing:0px">1</div>
<div class="a" style="left:1461px;top:770.3px;width:4px;height:1.2px;background:#444"></div>
<svg class="a" style="left:235px;top:792.3px" width="15" height="15" viewBox="0 0 15 15"><path d="M7,6.5 L9.8,3.7 Q11.2,2.3 12.3,3.4 Q13.4,4.5 12,5.9 L9.2,8.7 M8,9.5 L5.2,12.3 Q3.8,13.7 2.7,12.6 Q1.6,11.5 3,10.1 L5.8,7.3 M5.8,10 L10,5.8" stroke="#7189a5" stroke-width="1.2" fill="none"/><path d="M10.2,11.6 H14.2 L12.2,14 Z" fill="#3d3d3d"/></svg>
<div class="t" style="left:410.5px;top:793.89px;font-size:12.3px;color:#555;letter-spacing:0.05px">5/30/18 3:55 PM</div>
<div class="t" style="left:560.5px;top:793.89px;font-size:12.3px;color:#555;letter-spacing:0.05px;letter-spacing:-0.55px">SY00500</div>
<div class="t" style="left:710.5px;top:793.89px;font-size:12.3px;color:#555;letter-spacing:0.05px">Delete</div>
<div class="t" style="left:860.5px;top:793.89px;font-size:12.3px;color:#555;letter-spacing:0.05px">Fabrikam, Inc.</div>
<div class="t" style="left:1010.5px;top:793.89px;font-size:12.3px;color:#555;letter-spacing:0.05px;letter-spacing:-0.42px">BCHSOURC = GL_Nor...</div>
<div class="t" style="left:1160.5px;top:793.89px;font-size:12.3px;color:#555;letter-spacing:0.05px;letter-spacing:-0.7px">USERID</div>
<div class="t" style="left:1310.5px;top:793.89px;font-size:12.3px;color:#555;letter-spacing:0.05px;letter-spacing:0px">soelberg</div>
<div class="a" style="left:1461px;top:800.3px;width:4px;height:1.2px;background:#444"></div>
<div class="a" style="left:1547px;top:545px;width:21px;height:268px;background:#f1f1f1"></div>
<div class="a" style="left:1553px;top:552px;width:0;height:0;border-left:5.0px solid transparent;border-right:5.0px solid transparent;border-bottom:6px solid #a3a3a3"></div>
<div class="a" style="left:1549px;top:566px;width:17px;height:134px;background:#c1c1c1"></div>
<div class="a" style="left:230px;top:813px;width:1339px;height:1px;background:#dcdcdc"></div>
<div class="t" style="left:240px;top:826.89px;font-size:12.3px;color:#777;letter-spacing:0px"><b style="color:#6d6d6d">Copyright</b> Fastpath © 2018</div>
<div class="a" style="left:1585px;top:90.5px;width:0;height:0;border-left:4.5px solid transparent;border-right:4.5px solid transparent;border-bottom:5px solid #a3a3a3"></div>
<div class="a" style="left:1581px;top:103px;width:17px;height:493px;background:#c1c1c1"></div>
<div class="a" style="left:1584.5px;top:835px;width:0;height:0;border-left:5.0px solid transparent;border-right:5.0px solid transparent;border-top:6px solid #505050"></div>
<!--/GRID-->
</body></html>
